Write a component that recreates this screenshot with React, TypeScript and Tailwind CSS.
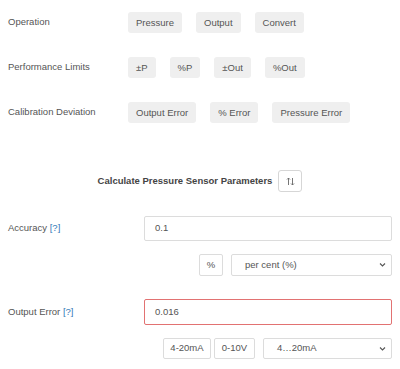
import React from "react";

const FONT = { fontFamily: '"Liberation Sans", Arial, sans-serif' };

function Chip({ children }: { children: React.ReactNode }) {
  return (
    <button className="h-[21px] rounded-[3px] bg-[#efefef] px-[8px] text-[9.5px] leading-[21px] text-[#555] mr-[14px]">
      {children}
    </button>
  );
}

function ChoiceRow({ label, options }: { label: string; options: string[] }) {
  return (
    <div className="flex items-center py-[12px]">
      <div className="w-[120px] text-[9.5px] text-[#555]">{label}</div>
      <div className="flex">
        {options.map((o) => (
          <Chip key={o}>{o}</Chip>
        ))}
      </div>
    </div>
  );
}

function Chevron() {
  return (
    <svg width="7" height="5" viewBox="0 0 7 5" fill="none" className="absolute right-[5px] top-1/2 -translate-y-1/2">
      <path d="M1 1L3.5 3.5L6 1" stroke="#555" strokeWidth="1.1" />
    </svg>
  );
}

function FakeSelect({ value, height }: { value: string; height: number }) {
  return (
    <div
      className="relative flex flex-1 items-center rounded-[2px] border border-[#dcdcdc] bg-white pl-[13px] text-[9.5px] text-[#555]"
      style={{ height }}
    >
      {value}
      <Chevron />
    </div>
  );
}

function SmallBtn({ children, w }: { children: React.ReactNode; w: string }) {
  return (
    <div className={`flex items-center justify-center rounded-[2px] border border-[#dcdcdc] bg-white text-[9.5px] text-[#555] ${w}`}>
      {children}
    </div>
  );
}

export default function App() {
  return (
    <div className="w-[400px] h-[369px] overflow-hidden bg-white px-[8px]" style={FONT}>
      <ChoiceRow label="Operation" options={["Pressure", "Output", "Convert"]} />
      <ChoiceRow label="Performance Limits" options={["±P", "%P", "±Out", "%Out"]} />
      <ChoiceRow label="Calibration Deviation" options={["Output Error", "% Error", "Pressure Error"]} />

      <div className="mt-[35px] flex items-center justify-center gap-[6px]">
        <span className="text-[9.5px] font-bold text-[#444]">Calculate Pressure Sensor Parameters</span>
        <div className="flex h-[22px] w-[24px] items-center justify-center rounded-[3px] border border-[#d6d6d6] bg-white">
          <svg width="9" height="9" viewBox="0 0 9 9" fill="none" stroke="#666" strokeWidth="0.9">
            <path d="M2.5 8V1M1 2.5L2.5 1L4 2.5" />
            <path d="M6.5 1V8M5 6.5L6.5 8L8 6.5" />
          </svg>
        </div>
      </div>

      <div className="mt-[24px] flex items-center">
        <div className="w-[136px] text-[9.5px] text-[#555]">
          Accuracy <span className="text-[#337ab7]">[?]</span>
        </div>
        <div className="flex h-[25px] flex-1 items-center rounded-[2px] border border-[#dcdcdc] pl-[10px] text-[9.5px] text-[#555]">
          0.1
        </div>
      </div>

      <div className="mt-[13px] flex h-[22px] justify-end gap-[8px] pl-[191px]">
        <SmallBtn w="w-[24px]">%</SmallBtn>
        <FakeSelect value="per cent (%)" height={22} />
      </div>

      <div className="mt-[23px] flex items-center">
        <div className="w-[136px] text-[9.5px] text-[#555]">
          Output Error <span className="text-[#337ab7]">[?]</span>
        </div>
        <div className="flex h-[26px] flex-1 items-center rounded-[2px] border border-[#e27272] pl-[10px] text-[9.5px] text-[#555]">
          0.016
        </div>
      </div>

      <div className="mt-[13px] flex h-[21px] pl-[155px]">
        <SmallBtn w="w-[48px]">4-20mA</SmallBtn>
        <div className="w-[3px]" />
        <SmallBtn w="w-[41px]">0-10V</SmallBtn>
        <div className="w-[8px]" />
        <FakeSelect value="4…20mA" height={21} />
      </div>
    </div>
  );
}
